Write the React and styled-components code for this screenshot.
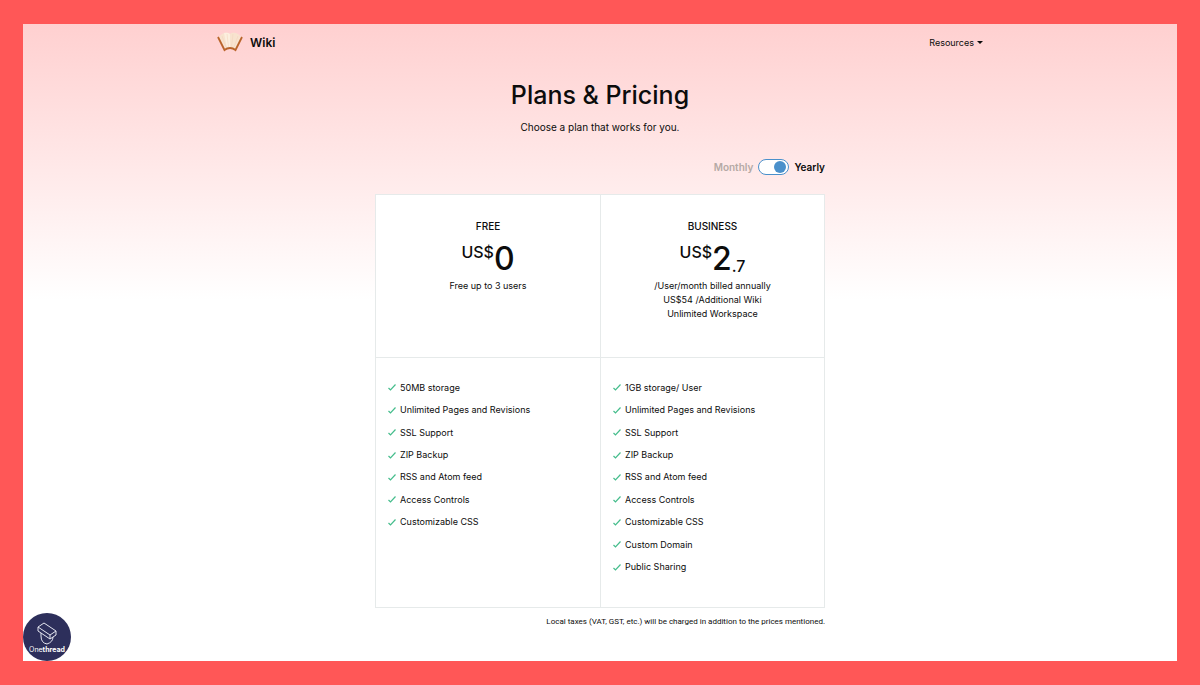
import React, { useState } from "react";
import styled, { createGlobalStyle } from "styled-components";

const sharedFeatures = [
  "Unlimited Pages and Revisions",
  "SSL Support",
  "ZIP Backup",
  "RSS and Atom feed",
  "Access Controls",
  "Customizable CSS",
];

const plans = [
  {
    name: "FREE",
    price: "0",
    notes: ["Free up to 3 users"],
    features: ["50MB storage", ...sharedFeatures],
  },
  {
    name: "BUSINESS",
    price: "2",
    decimals: ".7",
    notes: [
      "/User/month billed annually",
      "US$54 /Additional Wiki",
      "Unlimited Workspace",
    ],
    features: [
      "1GB storage/ User",
      ...sharedFeatures,
      "Custom Domain",
      "Public Sharing",
    ],
  },
];

const WikiLogo = () => (
  <svg width="26" height="20" viewBox="0 0 26 20" aria-hidden="true">
    <path d="M2 5 Q4 2 7 1 Q11 0 13 2 Q15 0 19 1 Q22 2 24 5 L18 17 L13 16 L8 17Z" fill="#f8e3cf" />
    <path d="M7 1 Q11 0 13 2 V16 L10 16Z" fill="#fcefdf" />
    <path
      d="M10 2 L11.5 15 M16 2 L14.5 15 M5 4 L9 15 M21 4 L17 15"
      stroke="#f1d3ba"
      strokeWidth="0.5"
      fill="none"
    />
    <path
      d="M1 5 L7.5 18 Q10 16 13 16 Q16 16 18.5 18 L25 5"
      stroke="#b9652b"
      strokeWidth="1.8"
      fill="none"
    />
  </svg>
);

const CheckIcon = () => (
  <svg width="8" height="8" viewBox="0 0 8 8" aria-hidden="true">
    <path d="M0.5 5 L2.5 7 L7.5 1.5" fill="none" stroke="#45bd8c" strokeWidth="1.2" />
  </svg>
);

const BadgeIcon = () => (
  <svg width="22" height="24" viewBox="0 0 22 24" aria-hidden="true">
    <g fill="none" stroke="#e4e6f0" strokeWidth="1" strokeLinejoin="round">
      <path d="M2 5 L8 1 L20 9 L14 13Z" />
      <path d="M2 5 V9 L14 17 V13 M14 17 L20 13 V9" />
      <path d="M5 11 V14 Q5 21 11 22 Q17 20 17 15" />
    </g>
  </svg>
);

const PlanCard = ({ plan }) => (
  <Card>
    <PlanHead>
      <PlanName>{plan.name}</PlanName>
      <Price>
        <Currency>US$</Currency>
        <Amount>{plan.price}</Amount>
        {plan.decimals && <Decimals>{plan.decimals}</Decimals>}
      </Price>
      {plan.notes.map((note) => (
        <PlanNote key={note}>{note}</PlanNote>
      ))}
    </PlanHead>
    <FeatureList>
      {plan.features.map((feature) => (
        <Feature key={feature}>
          <CheckIcon />
          {feature}
        </Feature>
      ))}
    </FeatureList>
  </Card>
);

const App = () => {
  const [yearly, setYearly] = useState(true);

  return (
    <>
      <GlobalStyle />
      <Frame>
        <Page>
          <Header>
            <Brand href="#wiki">
              <WikiLogo />
              Wiki
            </Brand>
            <MenuButton type="button">
              Resources
              <Caret />
            </MenuButton>
          </Header>
          <Main>
            <Title>Plans &amp; Pricing</Title>
            <Subtitle>Choose a plan that works for you.</Subtitle>
            <BillingLabel>
              <BillingText $active={!yearly}>Monthly</BillingText>
              <Switch
                type="checkbox"
                checked={yearly}
                onChange={() => setYearly(!yearly)}
              />
              <BillingText $active={yearly}>Yearly</BillingText>
            </BillingLabel>
            <Plans>
              {plans.map((plan) => (
                <PlanCard key={plan.name} plan={plan} />
              ))}
            </Plans>
            <TaxNote>
              Local taxes (VAT, GST, etc.) will be charged in addition to the
              prices mentioned.
            </TaxNote>
          </Main>
          <Badge>
            <BadgeIcon />
            <BadgeText>
              One<b>thread</b>
            </BadgeText>
          </Badge>
        </Page>
      </Frame>
    </>
  );
};

const GlobalStyle = createGlobalStyle`
  * {
    box-sizing: border-box;
  }

  body {
    margin: 0;
    background-color: #ff5757;
    color: #0c0c0c;
    font-family: Inter, sans-serif;
    font-size: 9px;
  }
`;

const Frame = styled.div`
  min-height: 100vh;
  padding: 24px 23px;
  display: flex;
`;

const Page = styled.div`
  position: relative;
  flex: 1;
  background: #fff linear-gradient(#ffd0d0, #fff) no-repeat;
  background-size: 100% 276px;
`;

const Header = styled.header`
  max-width: 766px;
  height: 36px;
  margin: 0 auto;
  display: flex;
  align-items: center;
  justify-content: space-between;
`;

const Brand = styled.a`
  display: flex;
  align-items: center;
  gap: 7px;
  color: #0c0c0c;
  font-size: 12px;
  font-weight: 600;
  text-decoration: none;
`;

const MenuButton = styled.button`
  display: flex;
  align-items: center;
  gap: 3px;
  padding: 0;
  border: none;
  background: none;
  color: #0c0c0c;
  font: inherit;
  cursor: pointer;
`;

const Caret = styled.span`
  border: 3px solid transparent;
  border-top-color: #0c0c0c;
  border-bottom-width: 0;
`;

const Main = styled.main`
  max-width: 450px;
  margin: 0 auto;
`;

const Title = styled.h1`
  margin: 18px 0 0;
  font-size: 25px;
  line-height: 34px;
  font-weight: 500;
  text-align: center;
`;

const Subtitle = styled.p`
  margin: 7px 0 0;
  font-size: 10px;
  line-height: 16px;
  text-align: center;
`;

const BillingLabel = styled.label`
  display: flex;
  align-items: center;
  justify-content: flex-end;
  gap: 5px;
  margin: 24px 0 19px;
  font-size: 10px;
  line-height: 16px;
  font-weight: 600;
  cursor: pointer;
`;

const BillingText = styled.span`
  color: ${({ $active }) => ($active ? "#0c0c0c" : "#b5a9a5")};
`;

const Switch = styled.input`
  appearance: none;
  display: flex;
  align-items: center;
  width: 31px;
  height: 16px;
  margin: 0;
  padding: 0 2px;
  border: 1px solid #4a90cb;
  border-radius: 8px;
  background-color: #fff;
  cursor: pointer;

  &::before {
    content: "";
    width: 12px;
    height: 12px;
    border-radius: 50%;
    background-color: #4a90cb;
  }

  &:checked {
    justify-content: flex-end;
  }
`;

const Plans = styled.div`
  display: grid;
  grid-template-columns: 1fr 1fr;
  border: 1px solid #e6eaea;
  background-color: #fff;
`;

const Card = styled.section`
  & + & {
    border-left: 1px solid #e6eaea;
  }
`;

const PlanHead = styled.div`
  min-height: 163px;
  padding-top: 23px;
  border-bottom: 1px solid #e6eaea;
  text-align: center;
`;

const PlanName = styled.h2`
  margin: 0;
  font-size: 10px;
  line-height: 16px;
  font-weight: 500;
`;

const Price = styled.div`
  display: flex;
  justify-content: center;
  height: 34px;
  margin: 8px 0 3px;
  font-weight: 500;
`;

const Currency = styled.span`
  font-size: 16px;
  line-height: 20px;
`;

const Amount = styled.span`
  font-size: 32px;
  line-height: 34px;
`;

const Decimals = styled.span`
  align-self: flex-end;
  font-size: 16px;
  line-height: 20px;
`;

const PlanNote = styled.div`
  line-height: 14px;
`;

/* nine rows in both plans so that the features line up */
const FeatureList = styled.ul`
  display: grid;
  grid-template-rows: repeat(9, 1fr);
  height: 202px;
  margin: 18px 0 29px;
  padding: 0 12px;
  list-style: none;
`;

const Feature = styled.li`
  display: flex;
  align-items: center;
  gap: 4px;
`;

const TaxNote = styled.p`
  margin: 7px 0 0;
  font-family: Roboto, sans-serif;
  font-size: 8px;
  line-height: 14px;
  text-align: right;
`;

const Badge = styled.div`
  position: absolute;
  left: 0;
  bottom: 0;
  width: 48px;
  height: 48px;
  padding-top: 9px;
  border-radius: 50%;
  background-color: #2d2f5b;
  color: #fff;
  display: flex;
  flex-direction: column;
  align-items: center;
`;

const BadgeText = styled.span`
  font-size: 7px;
  line-height: 8px;
`;

export default App;
